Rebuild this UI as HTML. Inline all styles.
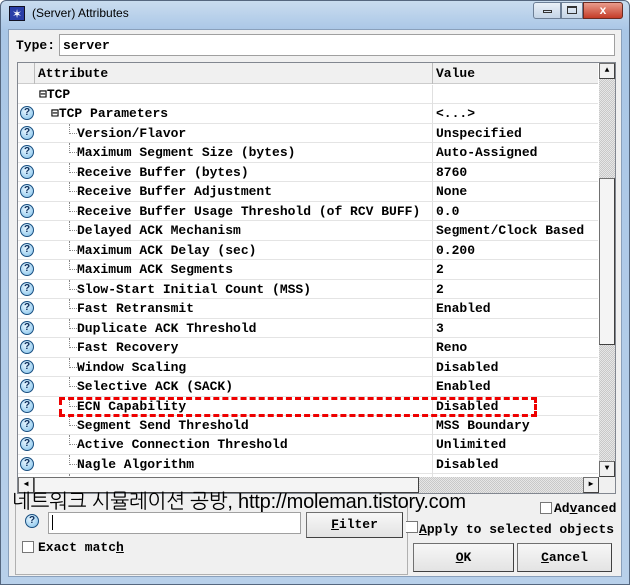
<!DOCTYPE html>
<html><head><meta charset="utf-8"><style>
*{margin:0;padding:0;box-sizing:border-box}
body{width:630px;height:585px;position:relative;overflow:hidden;background:#fff;font-family:"Liberation Mono",monospace;font-weight:bold;font-size:13px;color:#000}
.abs{position:absolute}
.win{left:0;top:0;width:630px;height:585px;background:linear-gradient(#c9dcef,#a9c6e6 30px,#b8d0ea);border:1px solid #55677f;border-radius:6px 6px 0 0}
.client{left:8px;top:29px;width:614px;height:548px;background:#f0f0f0;border:1px solid #8aa0bb}
.row{position:absolute;left:18px;width:580px;height:19.47px;border-bottom:1px solid #e4e4e4;background:#fff}
.q{position:absolute;left:2px;top:2px;width:14px;height:14px;border-radius:50%;background:radial-gradient(circle at 40% 35%,#e8f6ff,#7fc0ea);border:1px solid #1a4f80;font:bold 10px "Liberation Sans",sans-serif;color:#0c2d5a;text-align:center;line-height:12px}
.t{position:absolute;top:2px;white-space:pre}
.v{position:absolute;left:418px;top:2px;white-space:pre}
.vl{position:absolute;left:414px;top:0;height:19px;border-left:1px solid #e0e0e0}
.dash{position:absolute;left:51px;top:0;width:8px;height:10px;border-left:1px dotted #888;border-bottom:1px dotted #888}
.btn{position:absolute;background:linear-gradient(#f7f7f7,#e3e3e3);border:1px solid #707070;border-right-color:#404040;border-bottom-color:#404040;text-align:center}
.cb{position:absolute;width:12px;height:12px;background:#fff;border:1px solid #777}
</style></head><body>
<div class="abs win"></div>
<div class="abs" style="left:9px;top:6px;width:16px;height:15px;background:#2a3ea8;border:1px solid #112;color:#fff;font:12px 'DejaVu Sans';text-align:center;line-height:14px">✶</div>
<div class="abs" style="left:32px;top:6px;font:12px 'Liberation Sans',sans-serif;color:#000">(Server) Attributes</div>
<div class="abs" style="left:533px;top:2px;width:28px;height:17px;border:1px solid #6d7f96;border-radius:3px 0 0 3px;background:linear-gradient(#eaf1f8,#c4d4e6)"></div>
<div class="abs" style="left:543px;top:10px;width:9px;height:3px;border:1px solid #333"></div>
<div class="abs" style="left:561px;top:2px;width:22px;height:17px;border:1px solid #6d7f96;background:linear-gradient(#eaf1f8,#c4d4e6)"></div>
<div class="abs" style="left:567px;top:6px;width:10px;height:8px;border:1px solid #333;border-top-width:2px"></div>
<div class="abs" style="left:583px;top:2px;width:40px;height:17px;border:1px solid #6b2b22;border-radius:0 3px 3px 0;background:linear-gradient(#e99c8c,#c43c28);color:#fff;font:bold 12px 'Liberation Sans';text-align:center;line-height:15px">x</div>
<div class="abs client"></div>
<div class="abs" style="left:16px;top:38px">Type:</div>
<div class="abs" style="left:59px;top:34px;width:556px;height:22px;background:#fff;border:1px solid #a0a0a0"></div>
<div class="abs" style="left:63px;top:38px">server</div>
<!-- table -->
<div class="abs" style="left:17px;top:62px;width:599px;height:432px;border:1px solid #828790;background:#fff"></div>
<div class="abs" style="left:18px;top:63px;width:580px;height:21px;background:#f0f0f0;border-bottom:1px solid #ccc"></div>
<div class="abs" style="left:34px;top:63px;height:21px;border-left:1px solid #bbb"></div>
<div class="abs" style="left:432px;top:63px;height:21px;border-left:1px solid #bbb"></div>
<div class="abs" style="left:38px;top:66px">Attribute</div>
<div class="abs" style="left:436px;top:66px">Value</div>
<div id="rows"></div>
<!-- vertical scrollbar -->
<div class="abs" style="left:599px;top:63px;width:16px;height:414px;background:repeating-conic-gradient(#c8c8c8 0 25%,#e6e6e6 0 50%) 0 0/2px 2px"></div>
<div class="abs btn" style="left:599px;top:63px;width:16px;height:16px;font-size:8px;line-height:14px;background:#f0f0f0">▲</div>
<div class="abs btn" style="left:599px;top:178px;width:16px;height:167px;background:#f4f4f4"></div>
<div class="abs btn" style="left:599px;top:461px;width:16px;height:16px;font-size:8px;line-height:14px;background:#f0f0f0">▼</div>
<!-- horizontal scrollbar -->
<div class="abs" style="left:18px;top:477px;width:581px;height:16px;background:repeating-conic-gradient(#c8c8c8 0 25%,#e6e6e6 0 50%) 0 0/2px 2px"></div>
<div class="abs btn" style="left:18px;top:477px;width:16px;height:16px;font-size:8px;line-height:14px;background:#f0f0f0">◀</div>
<div class="abs btn" style="left:34px;top:477px;width:385px;height:16px;background:#f4f4f4"></div>
<div class="abs btn" style="left:583px;top:477px;width:16px;height:16px;font-size:8px;line-height:14px;background:#f0f0f0">▶</div>
<div class="abs" style="left:599px;top:477px;width:16px;height:16px;background:#f0f0f0"></div>
<!-- red dashed -->
<div class="abs" style="left:59px;top:397px;width:478px;height:20px;border:3px dashed #e00;border-left:none;border-top-width:3px"></div>
<div class="abs" style="left:59px;top:397px;width:3px;height:20px;background:repeating-linear-gradient(#e00 0 8px,transparent 8px 12px)"></div>
<!-- bottom -->
<div class="abs" style="left:15px;top:503px;width:393px;height:72px;border:1px solid #b0b0b0;border-top:none"></div>
<div class="abs" style="left:12px;top:489px;font:20px 'Liberation Sans','NanumGothic','Noto Sans CJK KR',sans-serif;color:#000;letter-spacing:-0.2px;white-space:nowrap">네트워크 시뮬레이션 공방, http://moleman.tistory.com</div>
<div class="abs q" style="left:25px;top:514px;position:absolute">?</div>
<div class="abs" style="left:48px;top:512px;width:253px;height:22px;background:#fff;border:1px solid #a0a0a0"></div>
<div class="abs" style="left:52px;top:515px;width:1px;height:15px;background:#000"></div>
<div class="btn" style="left:306px;top:512px;width:97px;height:26px;line-height:24px"><u>F</u>ilter</div>
<div class="cb" style="left:22px;top:541px"></div>
<div class="abs" style="left:38px;top:540px">Exact matc<u>h</u></div>
<div class="cb" style="left:540px;top:502px"></div>
<div class="abs" style="left:554px;top:501px">Ad<u>v</u>anced</div>
<div class="cb" style="left:406px;top:521px;border-left:none"></div>
<div class="abs" style="left:419px;top:522px"><u>A</u>pply to selected objects</div>
<div class="btn" style="left:413px;top:543px;width:101px;height:29px;line-height:27px"><u>O</u>K</div>
<div class="btn" style="left:517px;top:543px;width:95px;height:29px;line-height:27px"><u>C</u>ancel</div>
<script>
var rows=[["TCP","",0],["TCP Parameters","<...>",1],["Version/Flavor","Unspecified",2],["Maximum Segment Size (bytes)","Auto-Assigned",2],["Receive Buffer (bytes)","8760",2],["Receive Buffer Adjustment","None",2],["Receive Buffer Usage Threshold (of RCV BUFF)","0.0",2],["Delayed ACK Mechanism","Segment/Clock Based",2],["Maximum ACK Delay (sec)","0.200",2],["Maximum ACK Segments","2",2],["Slow-Start Initial Count (MSS)","2",2],["Fast Retransmit","Enabled",2],["Duplicate ACK Threshold","3",2],["Fast Recovery","Reno",2],["Window Scaling","Disabled",2],["Selective ACK (SACK)","Enabled",2],["ECN Capability","Disabled",2],["Segment Send Threshold","MSS Boundary",2],["Active Connection Threshold","Unlimited",2],["Nagle Algorithm","Disabled",2],["","",2]];
var h="";rows.forEach(function(r,i){var top=85+i*19.47;var hh=(i==20)?"height:7px;":"";
h+='<div class="row" style="top:'+top+'px;'+hh+'">';
if(i>0&&i<20)h+='<div class="q">?</div>';
h+='<div class="vl"></div>';
var e=function(s){return s.replace(/</g,"&lt;").replace(/>/g,"&gt;")};
if(r[2]==0)h+='<div class="t" style="left:21px">⊟TCP</div>';
else if(r[2]==1)h+='<div class="t" style="left:33px">⊟TCP Parameters</div>';
else{h+='<div class="dash"></div>';h+='<div class="t" style="left:59px">'+e(r[0])+'</div>';}
h+='<div class="v">'+e(r[1])+'</div></div>';});
document.getElementById("rows").innerHTML=h;
</script>
</body></html>
